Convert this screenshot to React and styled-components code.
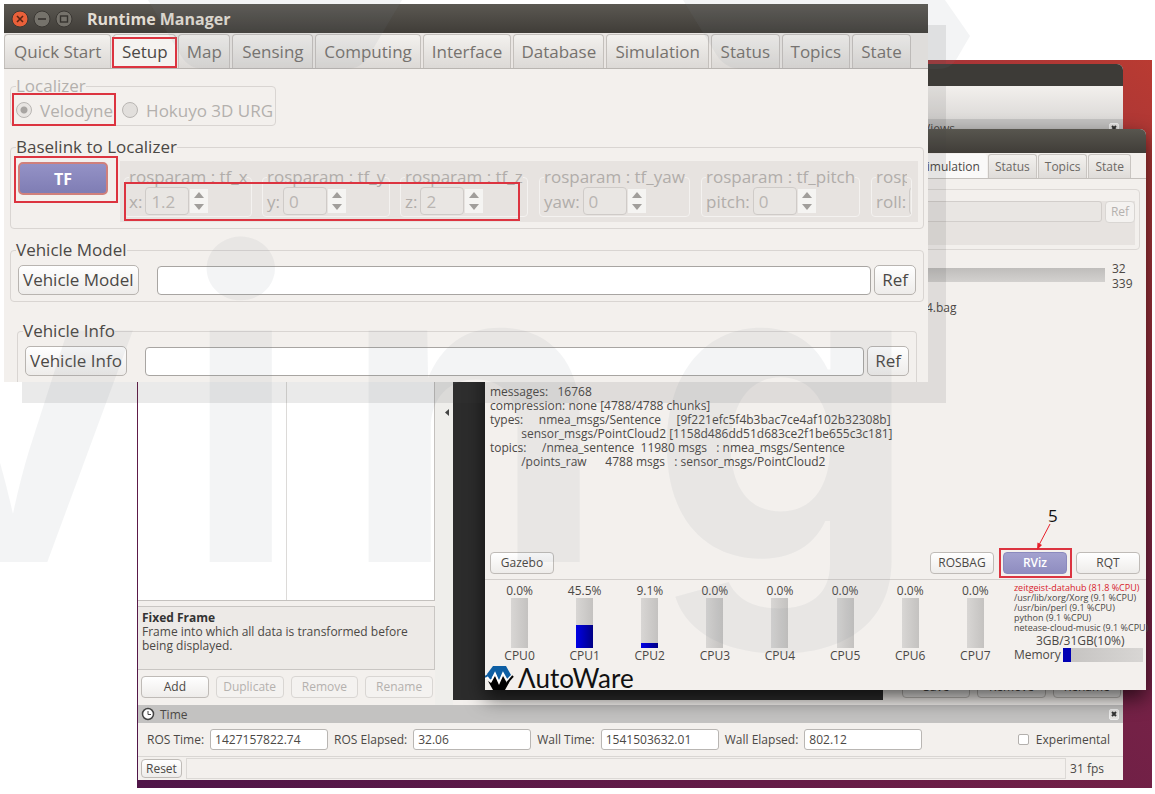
import React from "react";
import styled, { createGlobalStyle } from "styled-components";

const mainTabs = [
  { name: "Quick Start", size: 111 },
  { name: "Setup", size: 64, active: true },
  { name: "Map", size: 53 },
  { name: "Sensing", size: 83 },
  { name: "Computing", size: 109 },
  { name: "Interface", size: 91 },
  { name: "Database", size: 94 },
  { name: "Simulation", size: 106 },
  { name: "Status", size: 70 },
  { name: "Topics", size: 70 },
  { name: "State", size: 60 },
];

const markedParams = [
  { id: "tf_x", label: "x:", value: "1.2" },
  { id: "tf_y", label: "y:", value: "0" },
  { id: "tf_z", label: "z:", value: "2" },
];

const cpus = [0, 45.5, 9.1, 0, 0, 0, 0, 0];

const processes = [
  "zeitgeist-datahub (81.8 %CPU)",
  "/usr/lib/xorg/Xorg (9.1 %CPU)",
  "/usr/bin/perl (9.1 %CPU)",
  "python (9.1 %CPU)",
  "netease-cloud-music (9.1 %CPU)",
];

const times = [
  { id: "ros-time", label: "ROS Time:", value: "1427157822.74" },
  { id: "ros-elapsed", label: "ROS Elapsed:", value: "32.06" },
  { id: "wall-time", label: "Wall Time:", value: "1541503632.01" },
  { id: "wall-elapsed", label: "Wall Elapsed:", value: "802.12" },
];

const bagInfo = `messages:   16768
compression: none [4788/4788 chunks]
types:     nmea_msgs/Sentence     [9f221efc5f4b3bac7ce4af102b32308b]
          sensor_msgs/PointCloud2 [1158d486dd51d683ce2f1be655c3c181]
topics:     /nmea_sentence  11980 msgs   : nmea_msgs/Sentence
          /points_raw      4788 msgs   : sensor_msgs/PointCloud2`;

const Param = ({ id, label, value, size, clip }) => (
  <ParamGroup $size={size} $clip={clip}>
    <legend>rosparam : {id}</legend>
    <label htmlFor={id}>{label}</label>
    <ParamInput id={id} defaultValue={value} disabled />
    <Spinner>
      <button type="button" disabled aria-label="Increase">
        <svg width="10" height="6" viewBox="0 0 10 6"><path d="M5 0L10 6H0z" fill="#a19e9b" /></svg>
      </button>
      <button type="button" disabled aria-label="Decrease">
        <svg width="10" height="6" viewBox="0 0 10 6"><path d="M5 6L10 0H0z" fill="#a19e9b" /></svg>
      </button>
    </Spinner>
  </ParamGroup>
);

const RuntimeManager = () => (
  <ManagerWindow>
    <TitleBar>
      <svg width="62" height="18" viewBox="0 0 62 18">
        <circle cx="9" cy="9" r="8" fill="#e9603a" stroke="#3a3733" />
        <path d="M6 6l6 6M12 6l-6 6" stroke="#5a2413" strokeWidth="1.6" />
        <circle cx="31" cy="9" r="8" fill="#75726b" stroke="#3a3733" />
        <path d="M27 9h8" stroke="#35322e" strokeWidth="1.6" />
        <circle cx="53" cy="9" r="8" fill="#75726b" stroke="#3a3733" />
        <rect x="49.5" y="6" width="7" height="6" fill="none" stroke="#35322e" strokeWidth="1.4" />
      </svg>
      Runtime Manager
    </TitleBar>
    <Tabs>
      {mainTabs.map((tab) => (
        <Tab key={tab.name} type="button" $size={tab.size} $active={tab.active}>
          {tab.name}
          {tab.active && <Mark $inset="2px -2px 0 -2px" />}
        </Tab>
      ))}
    </Tabs>
    <ManagerBody>
      <RadioGroup>
        <legend>Localizer</legend>
        <label>
          <Radio type="radio" name="localizer" defaultChecked disabled /> Velodyne
          <Mark $inset="-2px -3px -1px -4px" />
        </label>
        <label>
          <Radio type="radio" name="localizer" disabled /> Hokuyo 3D URG
        </label>
      </RadioGroup>
      <Group>
        <legend>Baselink to Localizer</legend>
        <BaselinkRow>
          <TfCell>
            <TfButton type="button">TF</TfButton>
            <Mark $inset="0 0 19px 0" />
          </TfCell>
          <Params>
            <MarkedParams>
              {markedParams.map((p) => (
                <Param key={p.id} size={128} {...p} />
              ))}
              <Mark $inset="14px 8px -4px 0" />
            </MarkedParams>
            <Param id="tf_yaw" label="yaw:" value="0" size={151} />
            <Param id="tf_pitch" label="pitch:" value="0" size={159} />
            <Param id="tf_roll" label="roll:" value="0" size={41} clip />
          </Params>
        </BaselinkRow>
      </Group>
      <Group>
        <legend>Vehicle Model</legend>
        <FileRow>
          <Button type="button" $wide>Vehicle Model</Button>
          <PathInput aria-label="Vehicle Model path" />
          <Button type="button">Ref</Button>
        </FileRow>
      </Group>
      <InfoGroup>
        <legend>Vehicle Info</legend>
        <FileRow>
          <Button type="button" $wide>Vehicle Info</Button>
          <PathInput aria-label="Vehicle Info path" />
          <Button type="button">Ref</Button>
        </FileRow>
      </InfoGroup>
    </ManagerBody>
  </ManagerWindow>
);

const SimulationPanel = () => (
  <SimWindow>
    <SimTitle />
    <SimTabs>
      <SimTab type="button" $active>Simulation</SimTab>
      <SimTab type="button">Status</SimTab>
      <SimTab type="button">Topics</SimTab>
      <SimTab type="button">State</SimTab>
    </SimTabs>
    <SimBody>
      <BagBox>
        <BagFields>
          <input aria-label="Bag file" disabled />
          <SmallButton type="button" $w={30} disabled>Ref</SmallButton>
        </BagFields>
      </BagBox>
      <PlayRow>
        <PlayBar />
        <div>32<br />339</div>
      </PlayRow>
      <BagName>4.bag</BagName>
      <BagInfo>{bagInfo}</BagInfo>
      <Launchers>
        <SmallButton type="button" $w={64}>Gazebo</SmallButton>
        <Spacer />
        <SmallButton type="button" $w={64}>ROSBAG</SmallButton>
        <RvizCell>
          <RvizButton type="button" $w={64}>RViz</RvizButton>
          <Mark $inset="-4px -5px -4px -4px" />
          <Callout>
            5
            <svg width="18" height="28" viewBox="0 0 18 28">
              <path d="M15 1L4 22" stroke="#e8212b" fill="none" />
              <path d="M2 27L2.500 19.500L7 22z" fill="#e8212b" />
            </svg>
          </Callout>
        </RvizCell>
        <SmallButton type="button" $w={64}>RQT</SmallButton>
      </Launchers>
    </SimBody>
    <Monitor>
      {cpus.map((load, i) => (
        <Cpu key={i}>
          {load.toFixed(1)}%
          <CpuBar>
            <div style={{ height: `${load}%` }} />
          </CpuBar>
          CPU{i}
        </Cpu>
      ))}
      <Usage>
        <Processes>
          {processes.map((p) => (
            <li key={p}>{p}</li>
          ))}
        </Processes>
        <MemoryText>3GB/31GB(10%)</MemoryText>
        <Memory>
          Memory
          <div />
        </Memory>
      </Usage>
    </Monitor>
    <Logo>
      <svg width="29" height="24" viewBox="0 0 29 24">
        <path d="M8 0h13l5 9-4 5-4-7-4 8-4-8-4 6-4-5z" fill="#0d5ea3" />
        <path d="M3 15l3 2 4-7 4 9 4-9 4 7 3-2-5 9H8z" fill="#000" />
        <path d="M0 12h3l3 3 4-8 4 9 4-9 4 7 4-4" stroke="#fff" strokeWidth="1.500" fill="none" />
        <path d="M0 11l3-2 3 4" stroke="#0d5ea3" strokeWidth="2" fill="none" />
        <path d="M22 17l6-7" stroke="#000" strokeWidth="2" />
      </svg>
      ΛutoWare
    </Logo>
  </SimWindow>
);

const CloseBox = () => (
  <CloseButton type="button" aria-label="Close">
    <svg width="6" height="6" viewBox="0 0 6 6"><path d="M1 1l4 4M5 1L1 5" stroke="#333" strokeWidth="2" /></svg>
  </CloseButton>
);

const Rviz = () => (
  <RvizWindow>
    <RvizTitle />
    <Toolbar />
    <RvizMain>
      <Displays>
        <Tree>
          <div />
          <div />
        </Tree>
        <Description>
          <b>Fixed Frame</b>
          <br />
          Frame into which all data is transformed before being displayed.
        </Description>
        <PanelButtons>
          <SmallButton type="button">Add</SmallButton>
          <SmallButton type="button" disabled>Duplicate</SmallButton>
          <SmallButton type="button" disabled>Remove</SmallButton>
          <SmallButton type="button" disabled>Rename</SmallButton>
        </PanelButtons>
      </Displays>
      <Handle type="button" aria-label="Collapse">
        <svg width="4" height="7" viewBox="0 0 4 7"><path d="M4 0v7L0 3.500z" fill="#444" /></svg>
      </Handle>
      <Scene />
      <Views>
        <DockTitle $indent={24}>
          Views
          <CloseBox />
        </DockTitle>
        <PanelButtons>
          <SmallButton type="button">Save</SmallButton>
          <SmallButton type="button">Remove</SmallButton>
          <SmallButton type="button">Rename</SmallButton>
        </PanelButtons>
      </Views>
    </RvizMain>
    <DockTitle $indent={3}>
      <svg width="14" height="14" viewBox="0 0 14 14">
        <circle cx="7" cy="7" r="5.500" fill="#fff" stroke="#444" strokeWidth="1.500" />
        <path d="M7 4v3.500h3" stroke="#444" fill="none" />
      </svg>
      Time
      <CloseBox />
    </DockTitle>
    <TimeRow>
      {times.map((t) => (
        <TimeField key={t.id}>
          <label htmlFor={t.id}>{t.label}</label>
          <input id={t.id} defaultValue={t.value} />
        </TimeField>
      ))}
      <Experimental>
        <input type="checkbox" /> Experimental
      </Experimental>
    </TimeRow>
    <StatusBar>
      <SmallButton type="button">Reset</SmallButton>
      <StatusText />
      <Fps>31 fps</Fps>
    </StatusBar>
  </RvizWindow>
);

const App = () => {
  return (
    <Page>
      <GlobalStyle />
      <Desktop>
        <Rviz />
        <SimulationPanel />
      </Desktop>
      <RuntimeManager />
      <Watermark aria-hidden="true">
        <span>v</span>
        <span>i</span>
        <span>n</span>
        <span>g</span>
      </Watermark>
      <Emblem viewBox="0 0 1155 70">
        <path d="M148 0H402L370 54Q362 69 346 69H204Q188 69 180 54z" />
        <path d="M683 0L716 54Q725 69 742 69H938Q950 69 956 60L970 36L945 0z" />
      </Emblem>
    </Page>
  );
};

const GlobalStyle = createGlobalStyle`
  * {
    box-sizing: border-box;
  }

  body {
    margin: 0;
    background: #fff;
    overflow: hidden;
  }

  body, button, input {
    font-family: "Open Sans", "Noto Sans", sans-serif;
  }
`;

const Page = styled.div`
  position: relative;
  height: 100vh;
  overflow: hidden;
  color: #4b4845;
`;

const Mark = styled.span`
  position: absolute;
  inset: ${(p) => p.$inset};
  border: 2px solid #dc3440;
  pointer-events: none;
`;

const Watermark = styled.div`
  position: absolute;
  left: -115px;
  top: 196px;
  display: flex;
  gap: 44px;
  font-family: Inter, sans-serif;
  font-weight: 700;
  font-size: 424px;
  line-height: 1;
  color: rgba(120, 132, 148, 0.09);
  pointer-events: none;
`;

const Emblem = styled.svg`
  position: absolute;
  left: 0;
  top: 0;
  width: 100%;
  fill: rgba(120, 132, 148, 0.09);
  pointer-events: none;
`;

const Desktop = styled.div`
  position: absolute;
  inset: 60px 3px 6px 137px;
  overflow: hidden;
  font-size: 12px;
  background: linear-gradient(to top right, #4f1548, #7a2346 62%, #b93b32);
`;

/* runtime manager */

const ManagerWindow = styled.section`
  position: absolute;
  left: 4px;
  right: 227px;
  top: 4px;
  font-size: 17px;
  background: #f3f0ed;
  box-shadow: 18px 21px 0 rgba(60, 60, 60, 0.11);
`;

const TitleBar = styled.header`
  display: flex;
  align-items: center;
  gap: 14px;
  height: 29px;
  padding-left: 7px;
  color: #e2ddd3;
  font-size: 16px;
  font-weight: 700;
  background: linear-gradient(#5b5852, #403d38);
`;

const Tabs = styled.nav`
  display: flex;
  height: 36px;
  padding: 1px 15px 0 0;
  background: #eae6e3;
  border-bottom: 1px solid #b9b5b1;
`;

const Tab = styled.button`
  position: relative;
  flex: ${(p) => p.$size} 1 0;
  min-width: 0;
  padding: 0;
  margin-right: 2px;
  white-space: nowrap;
  font-size: 17px;
  color: ${(p) => (p.$active ? "#4b4845" : "#76726e")};
  border: 1px solid #c4c0bc;
  border-bottom: none;
  border-radius: 4px 4px 0 0;
  background: ${(p) => (p.$active ? "#f5f3f0" : "linear-gradient(#f3f1ee, #dcd9d6)")};
`;

const ManagerBody = styled.div`
  display: flex;
  flex-direction: column;
  gap: 12px;
  padding: 8px 4px 0 6px;
`;

const Group = styled.fieldset`
  min-width: 0;
  margin: 0;
  padding: 0 5px;
  border: 1px solid #d9d5d2;
  border-radius: 4px;

  legend {
    padding: 0;
    line-height: 18px;
  }
`;

const RadioGroup = styled(Group)`
  display: flex;
  align-self: flex-start;
  gap: 9px;
  padding-right: 2px;
  color: #b4b0ad;

  label {
    position: relative;
    display: flex;
    align-items: center;
    gap: 8px;
    height: 30px;
  }
`;

const Radio = styled.input`
  appearance: none;
  width: 16px;
  height: 16px;
  margin: 0;
  border: 1px solid #b9b6b3;
  border-radius: 50%;
  background: #e2dfdc;

  &:checked {
    background: radial-gradient(#a8a5a2 0 3px, #e8e5e2 4px);
  }
`;

const BaselinkRow = styled.div`
  display: flex;
  gap: 2px;
  height: 72px;
  margin-left: -2px;
`;

const TfCell = styled.div`
  position: relative;
  width: 104px;
  margin-bottom: 6px;
  padding: 6px 10px 0 4px;
`;

const TfButton = styled.button`
  width: 100%;
  height: 33px;
  color: #fff;
  font-size: 16px;
  font-weight: 700;
  border: 2px solid #d0807c;
  border-radius: 5px;
  background: linear-gradient(#9492c6, #7f7db4);
`;

const Params = styled.div`
  flex: 1;
  display: flex;
  gap: 11px;
  min-width: 0;
  margin: 5px 0 6px;
  padding: 7px 6px 5px 4px;
  background: #e7e3e0;
`;

const MarkedParams = styled.div`
  position: relative;
  flex: 1 1 404px;
  display: flex;
  gap: 10px;
  min-width: 0;
`;

const ParamGroup = styled.fieldset`
  flex: 1 1 ${(p) => p.$size}px;
  display: flex;
  align-items: center;
  min-width: 0;
  height: 49px;
  margin: 0;
  padding: 0 4px;
  overflow: ${(p) => (p.$clip ? "hidden" : "visible")};
  color: #b1adaa;
  border: 1px solid #f4f2f0;
  border-radius: 4px;

  legend {
    max-width: 100%;
    padding: 0;
    overflow: ${(p) => (p.$clip ? "hidden" : "visible")};
    line-height: 18px;
    white-space: nowrap;
  }
`;

const ParamInput = styled.input`
  flex: none;
  width: 44px;
  height: 28px;
  margin: 0 1px 0 3px;
  padding: 0 5px;
  font-size: 17px;
  color: #b9b5b2;
  border: 1px solid #cfcbc8;
  border-radius: 4px;
  background: #e9e6e3;
`;

const Spinner = styled.div`
  flex: none;
  display: flex;
  flex-direction: column;
  width: 18px;

  button {
    display: flex;
    align-items: center;
    justify-content: center;
    height: 12px;
    padding: 0;
    border: none;
    background: #f5f4f2;
  }
`;

const FileRow = styled.div`
  display: flex;
  align-items: center;
  gap: 3px;
  height: 42px;
  padding: 0 2px;
`;

const Button = styled.button`
  height: 30px;
  padding: 0 ${(p) => (p.$wide ? 4 : 7)}px;
  margin-right: ${(p) => (p.$wide ? 15 : 0)}px;
  white-space: nowrap;
  font-size: 17px;
  line-height: 24px;
  color: #4b4845;
  border: 1px solid #b8b4b0;
  border-radius: 5px;
  background: linear-gradient(#fff, #eeecea);
`;

const PathInput = styled.input`
  flex: 1;
  min-width: 0;
  height: 29px;
  border: 1px solid #a8a5a2;
  border-radius: 4px;
  background: #fff;
`;

const InfoGroup = styled(Group)`
  margin: 8px 7px 0;
  border-bottom: none;
  border-radius: 4px 4px 0 0;
`;

/* simulation window */

const SmallButton = styled.button`
  height: 22px;
  min-width: ${(p) => p.$w || 0}px;
  padding: 0 4px;
  font-size: 12px;
  line-height: 16px;
  color: #4b4845;
  border: 1px solid #bfbbb7;
  border-radius: 4px;
  background: linear-gradient(#fff, #eeecea);

  &:disabled {
    color: #b4b1ae;
    border-color: #d9d6d3;
    background: #f4f2f0;
  }
`;

const SimWindow = styled.section`
  position: absolute;
  left: 348px;
  right: 6px;
  top: 69px;
  bottom: 98px;
  display: flex;
  flex-direction: column;
  background: #f3f0ed;
  border-radius: 6px 6px 0 0;
  box-shadow: 0 8px 20px rgba(0, 0, 0, 0.65);
`;

const SimTitle = styled.header`
  height: 24px;
  border-radius: 6px 6px 0 0;
  background: linear-gradient(#58564f, #403d38);
`;

const SimTabs = styled.nav`
  display: flex;
  justify-content: flex-end;
  gap: 1px;
  height: 26px;
  padding: 1px 15px 0 0;
  border-bottom: 1px solid #c4c0bc;
`;

const SimTab = styled.button`
  padding: 0 6px;
  font-size: 12px;
  color: ${(p) => (p.$active ? "#4b4845" : "#6d6965")};
  border: 1px solid ${(p) => (p.$active ? "transparent" : "#c9c5c1")};
  border-bottom: none;
  border-radius: 3px 3px 0 0;
  background: ${(p) => (p.$active ? "#faf9f8" : "linear-gradient(#f3f1ee, #dfdcd9)")};
`;

const SimBody = styled.div`
  flex: 1;
  display: flex;
  flex-direction: column;
  padding: 10px 6px 5px 5px;
  border-bottom: 1px solid #d3cfcc;
`;

const BagBox = styled.div`
  padding: 11px 4px 4px;
  border: 1px solid #dcd8d5;
  border-radius: 4px;
`;

const BagFields = styled.div`
  display: flex;
  align-items: flex-start;
  gap: 3px;
  height: 44px;
  background: #e7e3e0;

  input {
    flex: 1;
    height: 21px;
    border: 1px solid #d2cecb;
    border-radius: 3px;
    background: #e9e6e3;
  }
`;

const PlayRow = styled.div`
  display: flex;
  gap: 7px;
  margin-top: 11px;
  line-height: 15px;

  > div:last-child {
    width: 28px;
  }
`;

const PlayBar = styled.div`
  flex: 1;
  height: 14px;
  margin-top: 7px;
  background: linear-gradient(#bfbdbb, #d3d1cf);
`;

const BagName = styled.p`
  margin: 8px 0 69px 436px;
  line-height: 17px;
`;

const BagInfo = styled.pre`
  flex: 1;
  margin: 0;
  font-family: inherit;
  line-height: 14px;
`;

const Launchers = styled.div`
  display: flex;
  gap: 9px;
`;

const Spacer = styled.div`
  flex: 1;
`;

const RvizCell = styled.div`
  position: relative;
`;

const RvizButton = styled(SmallButton)`
  color: #fff;
  font-weight: 600;
  border-color: #8b89bd;
  background: linear-gradient(#a3a1cf, #8f8dc0);
`;

const Callout = styled.span`
  position: absolute;
  left: 45px;
  bottom: 49px;
  font-size: 17px;
  line-height: 18px;
  color: #111;

  svg {
    position: absolute;
    left: -13px;
    top: 16px;
  }
`;

const Monitor = styled.div`
  display: flex;
  height: 85px;
  padding: 3px 0 0 2px;
`;

const Cpu = styled.div`
  flex: 1 1 65px;
  display: flex;
  flex-direction: column;
  align-items: center;
  line-height: 15px;
`;

const CpuBar = styled.div`
  display: flex;
  align-items: flex-end;
  width: 17px;
  height: 50px;
  background: linear-gradient(to right, #d8d6d4, #c4c2c0);

  div {
    width: 100%;
    background: linear-gradient(to right, #0000e6, #000085);
  }
`;

const Usage = styled.div`
  flex: 1 1 138px;
  min-width: 0;
  padding-left: 6px;
`;

const Processes = styled.ul`
  margin: 0;
  padding: 0;
  list-style: none;
  font-size: 9px;
  line-height: 10px;
  white-space: nowrap;

  li:first-child {
    color: #d8222c;
  }
`;

const MemoryText = styled.div`
  padding-left: 22px;
  line-height: 15px;
`;

const Memory = styled.div`
  display: flex;
  align-items: center;
  gap: 2px;
  line-height: 14px;

  div {
    flex: 1;
    height: 14px;
    margin-right: 3px;
    background: linear-gradient(to right, #0000b4 8px, #c6c4c2 8px, #d8d6d4);
  }
`;

const Logo = styled.div`
  display: flex;
  align-items: center;
  gap: 4px;
  height: 25px;
  font-family: Lato, sans-serif;
  font-size: 26px;
  line-height: 24px;
  color: #111;
`;

/* rviz window */

const RvizWindow = styled.section`
  position: absolute;
  inset: 4px 29px 8px 1px;
  display: flex;
  flex-direction: column;
  background: #f3f0ed;
  border-radius: 0 6px 0 0;
`;

const RvizTitle = styled.header`
  height: 22px;
  border-radius: 0 6px 0 0;
  background: #3d3b37;
`;

const Toolbar = styled.div`
  height: 33px;
  background: linear-gradient(#f3f0ed, #dcdad8);
`;

const RvizMain = styled.div`
  flex: 1;
  display: flex;
  min-height: 0;
`;

const Displays = styled.div`
  display: flex;
  flex-direction: column;
  width: 297px;
`;

const Tree = styled.div`
  flex: 1;
  display: flex;
  background: #fff;
  border: 1px solid #c4c1be;
  border-left: none;

  div {
    flex: 1;
  }

  div + div {
    border-left: 1px solid #dcdad8;
  }
`;

const Description = styled.div`
  height: 64px;
  margin-top: 5px;
  padding: 4px 24px 0 4px;
  line-height: 14px;
  background: #edeae7;
  border: 1px solid #c9c6c3;
  border-left: none;

  b {
    color: #333;
  }
`;

const PanelButtons = styled.div`
  display: flex;
  gap: 7px;
  padding: 6px 2px 7px 3px;

  button {
    flex: 1 1 0;
    min-width: 0;
  }
`;

const Handle = styled.button`
  display: flex;
  align-items: center;
  justify-content: flex-end;
  width: 18px;
  padding: 0 4px 0 0;
  border: none;
  background: #efeeeb;
`;

const Scene = styled.div`
  flex: 1;
  margin-bottom: 5px;
  background: #2c2c2c;
`;

const Views = styled.div`
  display: flex;
  flex-direction: column;
  justify-content: space-between;
  width: 240px;
  padding-left: 16px;
`;

const DockTitle = styled.div`
  display: flex;
  align-items: center;
  gap: 5px;
  height: 18px;
  padding: 0 4px 0 ${(p) => p.$indent}px;
  background: #c3c2c1;
`;

const CloseButton = styled.button`
  display: flex;
  align-items: center;
  justify-content: center;
  width: 10px;
  height: 11px;
  margin-left: auto;
  padding: 0;
  border: 1px solid #eee;
  border-radius: 2px;
  background: #e4e2e0;
`;

const TimeRow = styled.div`
  display: flex;
  align-items: center;
  height: 34px;
  padding: 0 13px 0 9px;
  border-bottom: 1px solid #d9d6d3;
`;

const TimeField = styled.div`
  display: flex;
  align-items: center;
  gap: 6px;
  margin-right: 6px;

  input {
    width: 118px;
    height: 21px;
    padding: 0 4px;
    font-size: 12px;
    color: #4b4845;
    border: 1px solid #b9b6b3;
    border-radius: 3px;
    background: #fff;
  }
`;

const Experimental = styled.label`
  display: flex;
  align-items: center;
  gap: 7px;
  margin-left: auto;

  input {
    appearance: none;
    width: 11px;
    height: 11px;
    margin: 0;
    border: 1px solid #b3b0ad;
    border-radius: 2px;
    background: #fff;
  }
`;

const StatusBar = styled.footer`
  display: flex;
  align-items: center;
  gap: 4px;
  height: 23px;
  padding: 0 19px 0 3px;

  button {
    height: 19px;
  }
`;

const StatusText = styled.div`
  flex: 1;
  height: 21px;
  border: 1px solid #dcd9d6;
`;

const Fps = styled.div`
  line-height: 18px;
`;

export default App;
